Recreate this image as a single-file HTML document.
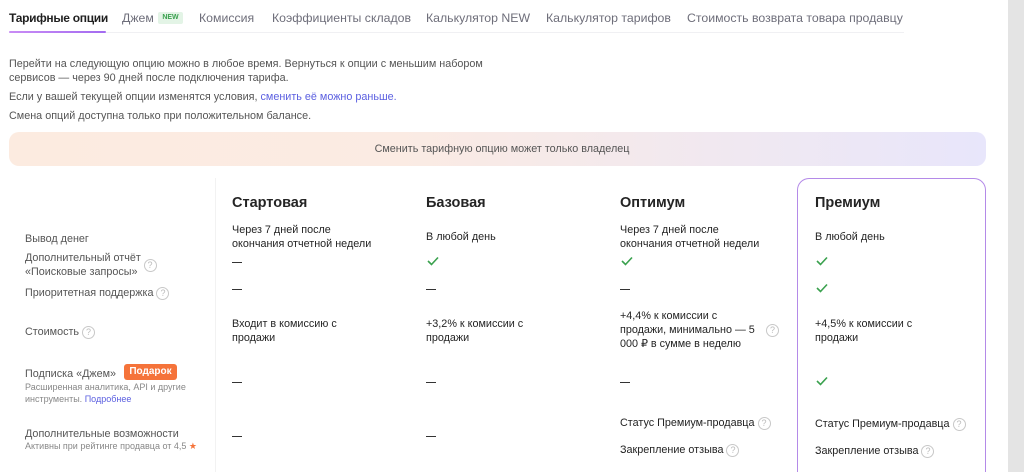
<!DOCTYPE html>
<html><head><meta charset="utf-8"><style>
*{margin:0;padding:0;box-sizing:border-box}
html,body{width:1024px;height:472px;overflow:hidden}
body{background:#fff;font-family:"Liberation Sans",sans-serif;color:#242424;font-size:10.8px}
#w{position:relative;width:1024px;height:472px;overflow:hidden}
.a{position:absolute;white-space:nowrap;line-height:14px}
.tab{position:absolute;top:11px;font-size:12.3px;color:#6e6e7a}
.g{color:#555}
.q{display:inline-block;width:13px;height:13px;border:1px solid #c8c8c8;border-radius:50%;color:#bbb;font-size:9px;line-height:11px;text-align:center;vertical-align:middle;margin-left:3px}
.h{position:absolute;font-size:14.5px;font-weight:bold;top:195px}
.ck{position:absolute;width:12px;height:10px}
.d{position:absolute;width:10px;height:1px;background:#333}
</style></head><body><div id="w">
<div style="position:absolute;left:1008px;top:0;width:16px;height:472px;background:#e4e4e4"></div>
<div style="position:absolute;left:9px;top:32px;width:895px;height:1px;background:#f0f0f3"></div>
<div style="position:absolute;left:9px;top:31px;width:97px;height:2px;background:linear-gradient(90deg,#c98cf5,#a36bf0);border-radius:1px"></div>
<div class="tab" style="left:9px;color:#1f1f1f;font-weight:bold;font-size:12px;letter-spacing:-0.3px">Тарифные опции</div>
<div class="tab" style="left:122px">Джем</div>
<div style="position:absolute;left:158px;top:12px;width:25px;height:12px;background:#e3f4e6;color:#3aa14e;font-size:7px;font-weight:bold;text-align:center;line-height:12px;border-radius:2px">NEW</div>
<div class="tab" style="left:199px">Комиссия</div>
<div class="tab" style="left:272px">Коэффициенты складов</div>
<div class="tab" style="left:426px">Калькулятор NEW</div>
<div class="tab" style="left:546px">Калькулятор тарифов</div>
<div class="tab" style="left:687px">Стоимость возврата товара продавцу</div>

<div class="a g" style="left:9px;top:57px">Перейти на следующую опцию можно в любое время. Вернуться к опции с меньшим набором</div>
<div class="a g" style="left:9px;top:71px">сервисов — через 90 дней после подключения тарифа.</div>
<div class="a g" style="left:9px;top:90px">Если у вашей текущей опции изменятся условия, <span style="color:#5b5fe0">сменить её можно раньше.</span></div>
<div class="a g" style="left:9px;top:109px">Смена опций доступна только при положительном балансе.</div>

<div style="position:absolute;left:9px;top:132px;width:977px;height:34px;border-radius:10px;background:linear-gradient(90deg,#fcebe0 0%,#fbebe3 40%,#e8e6fb 100%)"></div>
<div class="a g" style="left:0;width:1004px;text-align:center;top:142px">Сменить тарифную опцию может только владелец</div>

<div style="position:absolute;left:215px;top:178px;width:1px;height:294px;background:#f2f2f2"></div>
<div style="position:absolute;left:797px;top:178px;width:189px;height:294px;border:1.5px solid #b48ae8;border-bottom:none;border-radius:12px 12px 0 0"></div>

<div class="h" style="left:232px">Стартовая</div>
<div class="h" style="left:426px">Базовая</div>
<div class="h" style="left:620px">Оптимум</div>
<div class="h" style="left:815px">Премиум</div>

<div class="a g" style="left:25px;top:232px">Вывод денег</div>
<div class="a g" style="left:25px;top:251px">Дополнительный отчёт</div>
<div class="a g" style="left:25px;top:265px">«Поисковые запросы» <span class="q" style="position:relative;top:-7px">?</span></div>
<div class="a g" style="left:25px;top:286px">Приоритетная поддержка<span class="q">?</span></div>
<div class="a g" style="left:25px;top:325px">Стоимость<span class="q">?</span></div>
<div class="a g" style="left:25px;top:367px">Подписка «Джем»</div>
<div style="position:absolute;left:124px;top:364px;width:53px;height:16px;background:#f5733a;border-radius:3px;color:#fff;font-size:10px;font-weight:bold;text-align:center;line-height:16px">Подарок</div>
<div class="a" style="left:25px;top:380px;font-size:9px;color:#888">Расширенная аналитика, API и другие</div>
<div class="a" style="left:25px;top:392px;font-size:9px;color:#888">инструменты. <span style="color:#5b5fe0">Подробнее</span></div>
<div class="a g" style="left:25px;top:427px">Дополнительные возможности</div>
<div class="a" style="left:25px;top:439px;font-size:9px;color:#888">Активны при рейтинге продавца от 4,5 <span style="color:#f5733a">★</span></div>

<div class="a" style="left:232px;top:223px">Через 7 дней после</div>
<div class="a" style="left:232px;top:237px">окончания отчетной недели</div>
<div class="d" style="left:232px;top:262px"></div>
<div class="d" style="left:232px;top:289px"></div>
<div class="a" style="left:232px;top:317px">Входит в комиссию с</div>
<div class="a" style="left:232px;top:331px">продажи</div>
<div class="d" style="left:232px;top:382px"></div>
<div class="d" style="left:232px;top:436px"></div>

<div class="a" style="left:426px;top:230px">В любой день</div>
<svg class="ck" style="left:427px;top:256px" viewBox="0 0 12 10"><path d="M1 5l3.5 3.5L11 1.5" fill="none" stroke="#3aa14e" stroke-width="1.6"/></svg>
<div class="d" style="left:426px;top:289px"></div>
<div class="a" style="left:426px;top:317px">+3,2% к комиссии с</div>
<div class="a" style="left:426px;top:331px">продажи</div>
<div class="d" style="left:426px;top:382px"></div>
<div class="d" style="left:426px;top:436px"></div>

<div class="a" style="left:620px;top:223px">Через 7 дней после</div>
<div class="a" style="left:620px;top:237px">окончания отчетной недели</div>
<svg class="ck" style="left:621px;top:256px" viewBox="0 0 12 10"><path d="M1 5l3.5 3.5L11 1.5" fill="none" stroke="#3aa14e" stroke-width="1.6"/></svg>
<div class="d" style="left:620px;top:289px"></div>
<div class="a" style="left:620px;top:309px">+4,4% к комиссии с</div>
<div class="a" style="left:620px;top:323px">продажи, минимально — 5</div>
<div class="a" style="left:620px;top:337px">000 ₽ в сумме в неделю</div>
<span class="q" style="position:absolute;left:766px;top:324px;margin:0">?</span>
<div class="d" style="left:620px;top:382px"></div>
<div class="a" style="left:620px;top:416px">Статус Премиум-продавца<span class="q">?</span></div>
<div class="a" style="left:620px;top:443px">Закрепление отзыва<span class="q">?</span></div>

<div class="a" style="left:815px;top:230px">В любой день</div>
<svg class="ck" style="left:816px;top:256px" viewBox="0 0 12 10"><path d="M1 5l3.5 3.5L11 1.5" fill="none" stroke="#3aa14e" stroke-width="1.6"/></svg>
<svg class="ck" style="left:816px;top:283px" viewBox="0 0 12 10"><path d="M1 5l3.5 3.5L11 1.5" fill="none" stroke="#3aa14e" stroke-width="1.6"/></svg>
<div class="a" style="left:815px;top:317px">+4,5% к комиссии с</div>
<div class="a" style="left:815px;top:331px">продажи</div>
<svg class="ck" style="left:816px;top:376px" viewBox="0 0 12 10"><path d="M1 5l3.5 3.5L11 1.5" fill="none" stroke="#3aa14e" stroke-width="1.6"/></svg>
<div class="a" style="left:815px;top:417px">Статус Премиум-продавца<span class="q">?</span></div>
<div class="a" style="left:815px;top:444px">Закрепление отзыва<span class="q">?</span></div>
</div></body></html>
